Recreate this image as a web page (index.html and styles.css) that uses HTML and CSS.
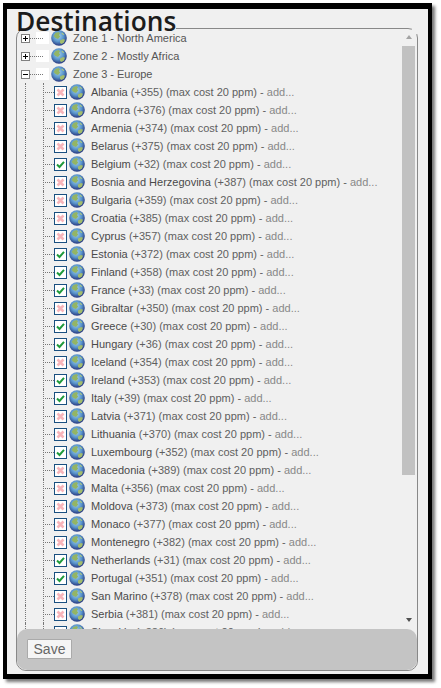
FILE: index.html
```html
<!DOCTYPE html>
<html lang="en">
<head>
<meta charset="utf-8">
<title>Destinations</title>
<link rel="stylesheet" href="styles.css">
</head>
<body>
<svg class="defs" width="0" height="0" aria-hidden="true">
  <defs>
    <radialGradient id="sea" cx="45%" cy="38%" r="62%">
      <stop offset="0" stop-color="#a5d2ec"/>
      <stop offset="0.55" stop-color="#5a96cc"/>
      <stop offset="1" stop-color="#27377f"/>
    </radialGradient>
    <symbol id="globe" viewBox="0 0 16 16">
      <circle cx="8" cy="8" r="7.8" fill="url(#sea)"/>
      <path d="M4.5 3 7.5 2 9 3.2 8 5 9.2 6.5 7 9 4.5 8 2.6 6Z" fill="#93b565"/>
      <path d="M9 10.5 12 9 14 9.8 12.8 12.8 10.2 14 9 12.8Z" fill="#a3bc6c"/>
      <path d="M11 2.4 13.4 4.4 12.3 5 10.5 3.6Z" fill="#b0c97c"/>
    </symbol>
    <symbol id="plus" viewBox="0 0 9 9">
      <rect x=".5" y=".5" width="8" height="8" fill="#fff" stroke="#808080"/>
      <path d="M2 4.5H7M4.5 2V7" stroke="#000" fill="none"/>
    </symbol>
    <symbol id="minus" viewBox="0 0 9 9">
      <rect x=".5" y=".5" width="8" height="8" fill="#fff" stroke="#808080"/>
      <path d="M2 4.5H7" stroke="#000" fill="none"/>
    </symbol>
    <symbol id="on" viewBox="0 0 13 13">
      <rect x=".5" y=".5" width="12" height="12" fill="#fff" stroke="#1a5080"/>
      <path d="M3 6.5 5.5 9 10 3.8" fill="none" stroke="#1e9a3a" stroke-width="2"/>
    </symbol>
    <symbol id="off" viewBox="0 0 13 13">
      <rect x=".5" y=".5" width="12" height="12" fill="#fff" stroke="#1a5080"/>
      <path d="M3.5 3.5 9.5 9.5M9.5 3.5 3.5 9.5" fill="none" stroke="#f7b5ba" stroke-width="2.6"/>
    </symbol>
  </defs>
</svg>
<main class="frame">
  <fieldset class="panel">
    <legend class="title">Destinations</legend>
    <div class="scroller">
      <ul class="tree" id="tree"></ul>
      <div class="scrollbar">
        <span class="arrow up"></span>
        <span class="track"><span class="thumb"></span></span>
        <span class="arrow down"></span>
      </div>
    </div>
    <div class="actions"><button class="save" type="button">Save</button></div>
  </fieldset>
</main>
<script src="tree.js"></script>
</body>
</html>
```
FILE: tree.js
```js
var countries = [
  ["Albania","355",0],["Andorra","376",0],["Armenia","374",0],["Belarus","375",0],["Belgium","32",1],
  ["Bosnia and Herzegovina","387",0],["Bulgaria","359",0],["Croatia","385",0],["Cyprus","357",0],
  ["Estonia","372",1],["Finland","358",1],["France","33",1],["Gibraltar","350",0],["Greece","30",1],
  ["Hungary","36",1],["Iceland","354",0],["Ireland","353",1],["Italy","39",1],["Latvia","371",0],
  ["Lithuania","370",0],["Luxembourg","352",1],["Macedonia","389",0],["Malta","356",0],["Moldova","373",0],
  ["Monaco","377",0],["Montenegro","382",0],["Netherlands","31",1],["Portugal","351",1],["San Marino","378",0],
  ["Serbia","381",0],["Slovakia","386",0]
];
function icon(name, cls) {
  return '<svg class="' + cls + '"><use href="#' + name + '"/></svg>';
}
function zone(label, open) {
  return '<span class="row">' + icon(open ? "minus" : "plus", "toggle") + '<span class="dots"></span><span class="blank"></span>' +
    icon("globe", "globe") + '<span class="zone">' + label + '</span></span>';
}
var html = '<li>' + zone("Zone 1 - North America", false) + '</li><li>' + zone("Zone 2 - Mostly Africa", false) + '</li><li class="open">' + zone("Zone 3 - Europe", true) + '<ul class="leaves">';
countries.forEach(function (c) {
  html += '<li class="leaf"><span class="row"><span class="stub"></span>' + icon(c[2] ? "on" : "off", "check") + icon("globe", "globe") +
    '<span class="label">' + c[0] + ' <span class="detail">(+' + c[1] + ') (max cost 20 ppm) -</span> <span class="muted">add...</span></span></span></li>';
});
html += '</ul></li>';
document.getElementById("tree").innerHTML = html;
```
FILE: styles.css
```css
* { box-sizing: border-box; }
html, body { margin: 0; padding: 0; background: #fff; }
body { width: 441px; height: 688px; padding: 3px 0 0 3px; font-family: "Liberation Sans", Arial, sans-serif; overflow: hidden; }
.defs { position: absolute; }
.frame {
  width: 429px;
  height: 676px;
  background: #f0f0f0;
  border: solid #000;
  border-width: 6px 4px 5px 4px;
  box-shadow: 3px 3px 3px #777;
  padding: 18px 10px 0 9px;
}
.panel {
  margin: 0;
  padding: 0;
  height: 644px;
  min-width: 0;
  border: 1px solid #888;
  border-radius: 10px;
}
.title {
  position: relative;
  top: -7px;
  margin-left: -1px;
  padding: 0;
  font-family: "Open Sans", sans-serif;
  font-size: 26.3px;
  font-weight: 600;
  line-height: 2px;
  color: #1c1c1c;
}
.scroller {
  display: flex;
  height: 600px;
  overflow: hidden;
}
.tree, .leaves { list-style: none; margin: 0; padding: 0; }
.tree { flex: 1; padding-left: 4px; overflow: hidden; }
.row { display: flex; align-items: center; height: 18px; white-space: nowrap; }
.toggle { width: 9px; height: 9px; flex: none; }
.dots { position: relative; z-index: 1; width: 13px; height: 0; border-top: 1px dotted #777; flex: none; }
.blank { width: 13px; height: 12px; margin-left: -7px; background: #fff; flex: none; }
.globe { width: 16px; height: 16px; margin-left: 2px; flex: none; }
.zone, .label { margin-left: 6px; font-size: 11px; color: #555; }
.label { color: #4a4a4a; }
.detail { color: #5f5f5f; }
.muted { color: #888; }
.leaf { position: relative; padding-left: 22px; }
.leaf::before { content: ""; position: absolute; left: 4px; top: 0; bottom: 0; border-left: 1px dotted #777; }
.leaf::after { content: ""; position: absolute; left: 22px; top: 0; bottom: 0; border-left: 1px dotted #777; }
.stub { width: 11px; height: 0; border-top: 1px dotted #777; flex: none; }
.check { width: 13px; height: 13px; flex: none; }
.scrollbar {
  position: relative;
  width: 17px;
  display: flex;
  flex-direction: column;
  align-items: center;
  flex: none;
}
.panel { position: relative; }
.panel::after {
  content: "";
  position: absolute;
  top: -2px;
  right: -2px;
  width: 7px;
  height: 7px;
  background: #f0f0f0;
}
.arrow { width: 0; height: 0; border: 3.5px solid transparent; flex: none; }
.arrow.up { border-bottom: 4px solid #a3a3a3; border-top: 0; margin: 6px 0 7px; }
.arrow.down { border-top: 4px solid #505050; border-bottom: 0; margin: 3px 0 7px; }
.track { flex: 1; width: 13px; }
.thumb { display: block; width: 13px; height: 429px; background: #c1c1c1; }
.actions {
  height: 41px;
  background: #c4c4c4;
  border-radius: 10px;
  padding: 10px 0 0 10px;
}
.save {
  display: block;
  width: 45px;
  height: 20px;
  padding: 0;
  background: #f5f5f5;
  border: 1px solid #aaa;
  border-radius: 1px;
  font-family: "Liberation Sans", Arial, sans-serif;
  font-size: 14px;
  color: #666;
}
```
